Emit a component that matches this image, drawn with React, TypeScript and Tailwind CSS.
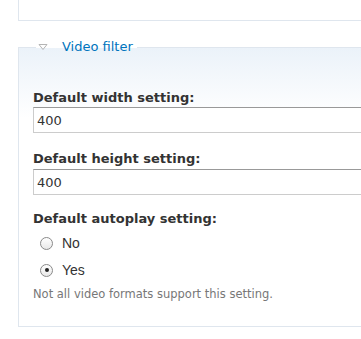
export default function App() {
  return (
    <div className="min-h-[339px] overflow-hidden bg-white pl-[18px] text-[#333]" style={{ fontFamily: '"DejaVu Sans", Verdana, sans-serif' }}>
      <div className="h-[21px] border-b border-l border-[#dfe6ee]" />
      <fieldset className="mt-[17px] h-[289px] border border-r-0 border-[#dfe6ee] bg-gradient-to-b from-[#ebf2f9] to-white to-[70px] px-[14px]">
        <legend className="ml-[3px] flex items-center px-[2px] text-[13px] text-[#0074bd]">
          <svg width="10" height="8" viewBox="0 0 10 8" className="mr-[14px]">
            <path d="M1 1.5 L9 1.5 L5 6.5 Z" fill="none" stroke="#b5b5b5" strokeWidth="1" strokeLinejoin="round" />
          </svg>
          <span className="pr-[2px] leading-[18px]">Video filter</span>
        </legend>

        <div className="mt-[34px]">
          <label className="block text-[13px] font-bold leading-[16px]">Default width setting:</label>
          <input
            defaultValue="400"
            className="mt-[1px] h-[26px] w-[400px] border border-[#ccc] border-t-[#999] bg-white px-[3px] text-[13px] text-[#333] outline-none"
          />
        </div>

        <div className="mt-[18px]">
          <label className="block text-[13px] font-bold leading-[16px]">Default height setting:</label>
          <input
            defaultValue="400"
            className="mt-[2px] h-[26px] w-[400px] border border-[#ccc] border-t-[#999] bg-white px-[3px] text-[13px] text-[#333] outline-none"
          />
        </div>

        <div className="mt-[16px]">
          <label className="block text-[13px] font-bold leading-[16px]">Default autoplay setting:</label>
          <div className="mt-[8px] flex flex-col gap-[11px] pl-[7px]" style={{ fontFamily: '"Liberation Sans", Arial, sans-serif' }}>
            <div className="flex items-center gap-[9px] text-[14px] leading-[16px] text-[#333]">
              <span className="h-[13px] w-[13px] rounded-full border border-[#8a8a8a] bg-gradient-to-b from-white to-[#e8e8e8]" />
              No
            </div>
            <div className="flex items-center gap-[9px] text-[14px] leading-[16px] text-[#333]">
              <span className="flex h-[13px] w-[13px] items-center justify-center rounded-full border border-[#8a8a8a] bg-gradient-to-b from-white to-[#e8e8e8]">
                <span className="h-[4px] w-[4px] rounded-full bg-[#222]" />
              </span>
              Yes
            </div>
          </div>
          <p className="mt-[9px] text-[11.5px] leading-[14px] text-[#777]">Not all video formats support this setting.</p>
        </div>
      </fieldset>
    </div>
  );
}
